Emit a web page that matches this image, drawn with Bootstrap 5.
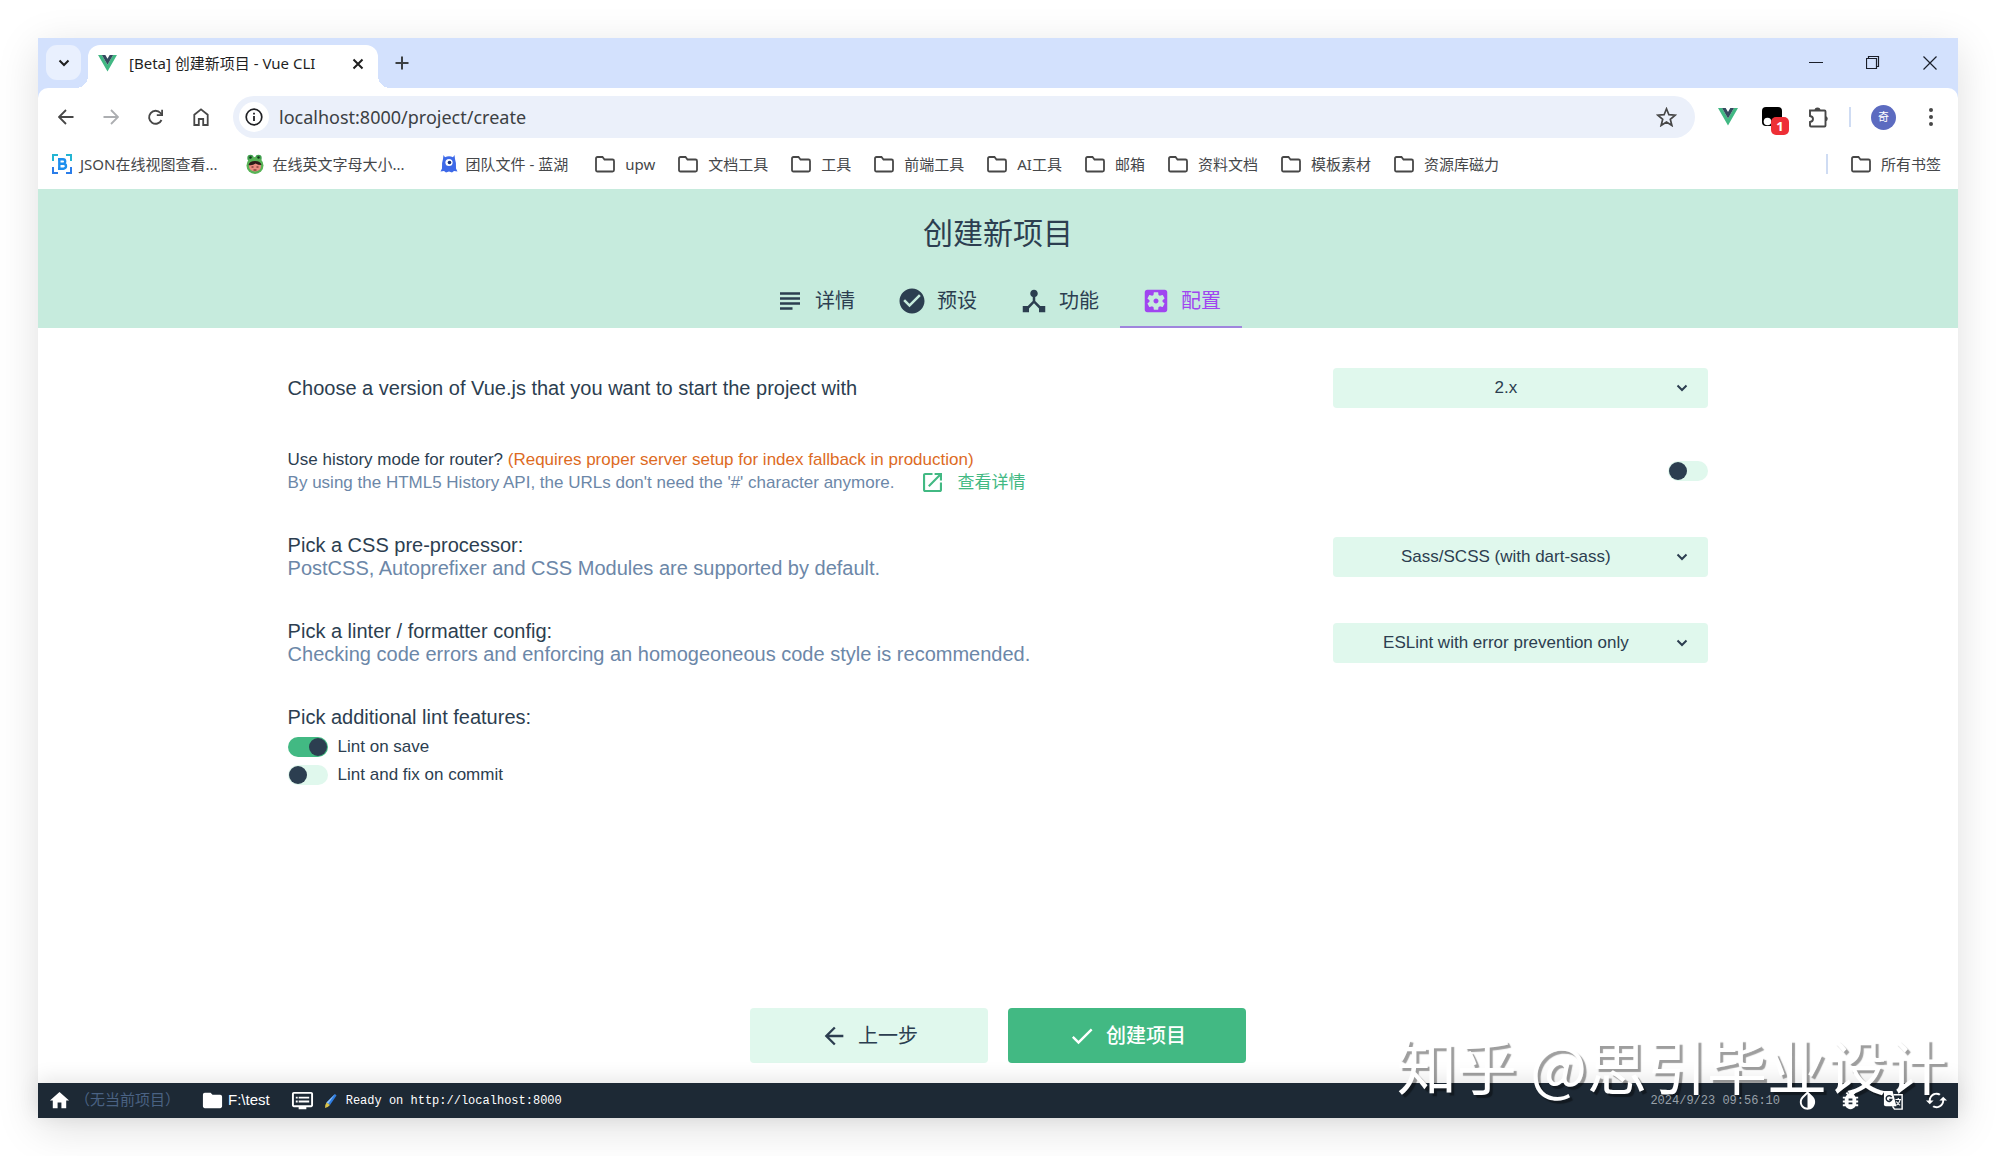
<!DOCTYPE html>
<html lang="zh-CN">
<head>
<meta charset="utf-8">
<meta name="viewport" content="width=device-width, initial-scale=1">
<title>[Beta] 创建新项目 - Vue CLI</title>
<link rel="stylesheet" href="https://cdn.jsdelivr.net/npm/bootstrap@5.3.0/dist/css/bootstrap.min.css">
<style>
  :root { --green: #42b983; --mint: #e0f8ed; --header: #c6ebdd; --ink: #2c3e50; --muted: #6c87a8; --purple: #a045f0; }
  body { background: #fff; color: var(--ink); font-family: "Liberation Sans", "Noto Sans CJK SC", sans-serif; font-size: 17px; }
  svg { display: block; flex: none; }
  button { color: inherit; }
  .desk { padding: 38px; min-height: 100vh; }
  .win { background: #fff; box-shadow: 0 10px 40px rgba(0,0,0,.13); }
  .chrome-ui { font-family: "Noto Sans", "Noto Sans CJK SC", sans-serif; font-size: 15px; color: #45474a; background: #d3e1fd; }
  .plain { background: none; border: 0; padding: 0; display: flex; align-items: center; justify-content: center; }

  /* tab strip */
  .strip { height: 50px; padding: 7px 0 0 8px; }
  .tab-search { width: 35px; height: 35px; border-radius: 11px; background: #e9f0fe; margin-right: 7px; color: #1f1f1f; }
  .page-tab { position: relative; width: 290px; height: 43px; padding: 0 14px 6px 10px; background: #fff; border-radius: 12px 12px 0 0; color: #1f1f1f; }
  .page-tab::before, .page-tab::after { content: ""; position: absolute; bottom: 0; width: 12px; height: 12px; }
  .page-tab::before { left: -12px; background: radial-gradient(circle at 0 0, transparent 12px, #fff 12px); }
  .page-tab::after { right: -12px; background: radial-gradient(circle at 100% 0, transparent 12px, #fff 12px); }
  .ctl { width: 57px; height: 36px; color: #1b1f2a; }

  /* toolbar and bookmarks */
  .tools { background: #fff; border-radius: 10px 10px 0 0; padding: 8px 12px 1px 5px; }
  .tool { width: 45px; height: 42px; color: #474747; }
  .omni { height: 42px; border-radius: 21px; background: #ebf0fa; margin-left: 10px; padding: 0 18px 0 6px; }
  .site { width: 30px; height: 30px; border-radius: 50%; background: #fff; }
  .url { border: 0; background: none; outline: 0; color: #3c4043; font-size: 18px; padding: 0 0 0 2px; }
  .ext { width: 46px; height: 42px; }
  .count { position: absolute; left: 22px; top: 21px; width: 18px; height: 18px; border-radius: 5px; background: #ee2f36; color: #fff; font-size: 13px; line-height: 18px; font-weight: 700; text-align: center; }
  .face { width: 25px; height: 25px; border-radius: 50%; background: #5c6bc0; color: #fff; font-size: 11px; }
  .sep { width: 2px; height: 20px; background: #cfdcf3; }
  .marks { background: #fff; height: 50px; padding: 0 17px 0 14px; gap: 23px; white-space: nowrap; }
  .marks a { display: flex; align-items: center; gap: 10px; color: inherit; text-decoration: none; }
  .marks .site-mark { gap: 8px; margin-right: 4px; }

  /* wizard */
  .top { background: var(--header); }
  .top h1 { font-size: 30px; line-height: 40px; padding: 25px 0 21px; margin: 0; font-weight: 400; }
  .step { color: var(--ink); text-decoration: none; font-size: 20px; line-height: 30px; padding: 11px 21px 10px; gap: 10px; border-bottom: 2px solid transparent; }
  .step.on { color: var(--purple); border-color: #9f85dd; }
  .prompts { width: 74%; padding: 40px 0; }
  .prompt { gap: 40px; margin-bottom: 40px; min-height: 40px; }
  .prompt label, .prompt p, legend { font-size: 20px; line-height: 23px; margin: 0; display: block; }
  .prompt.fine label, .prompt.fine p { font-size: 17px; }
  .prompt p { color: var(--muted); }
  .prompt p a { color: var(--green); text-decoration: none; }
  .warn { color: #dd6b1f; }
  .pick { appearance: none; width: 375px; height: 40px; flex: none; border: 0; border-radius: 4px; color: var(--ink); font-size: 17px; line-height: 24px; padding: 0 30px 0 0; text-align-last: center;
    background: var(--mint) url("data:image/svg+xml,%3Csvg xmlns='http://www.w3.org/2000/svg' viewBox='0 0 12 12'%3E%3Cpath d='M1.500 3.500 6 8l4.500-4.500' fill='none' stroke='%232c3e50' stroke-width='2'/%3E%3C/svg%3E") no-repeat right 20px center / 12px 12px; }
  .flip { appearance: none; width: 40px; height: 20px; border-radius: 10px; background: var(--mint); flex: none; margin: 0; padding: 1px; display: flex; }
  .flip::before { content: ""; width: 18px; height: 18px; border-radius: 50%; background: var(--ink); }
  .flip:checked { background: var(--green); justify-content: flex-end; }
  .lint { height: 28px; gap: 10px; }
  .acts { padding: 0 0 20px; gap: 20px; }
  .act { width: 238px; height: 55px; border: 0; border-radius: 4px; font-size: 20px; gap: 10px; display: flex; align-items: center; justify-content: center; }
  .act.back { background: var(--mint); }
  .act.go { background: var(--green); color: #fff; font-weight: 500; }

  /* status bar */
  .status { position: relative; height: 35px; background: #1d2935; color: #fff; padding: 0 10px; box-shadow: 0 -4px 20px rgba(0,0,0,.1); font-size: 15px; }
  .status .mono { font-family: "Liberation Mono", monospace; font-size: 12px; }
  .status .seg { margin-left: 21px; }
  .none { color: #4a6283; }
  .stamp { color: #98a0a8; }
  .wm { position: absolute; right: 11px; bottom: 14px; font-family: "Noto Sans CJK SC", sans-serif; font-size: 60px; line-height: 80px; color: #fff; text-shadow: 3px 3px 1px rgba(0,0,0,.38); white-space: nowrap; pointer-events: none; }
</style>
</head>
<body>
<svg width="0" height="0" class="position-absolute" aria-hidden="true">
  <symbol id="folder" viewBox="0 0 20 18"><path d="M1 3.500Q1 2 2.500 2h5l2 2.500h8Q19 4.500 19 6v9q0 1.500-1.500 1.500h-15Q1 16.500 1 15z" fill="none" stroke="#474747" stroke-width="1.800"/></symbol>
  <symbol id="vue" viewBox="0 0 20 18"><path d="M0 0h4l6 10.400L16 0h4L10 17.500z" fill="#41b883"/><path d="M4 0h3.700L10 4l2.300-4H16l-6 10.400z" fill="#34495e"/></symbol>
</svg>
<div class="desk d-flex">
<div class="win flex-grow-1 d-flex flex-column">

  <div class="chrome-ui">
    <div class="strip d-flex">
      <button class="plain tab-search" aria-label="搜索标签页"><svg width="12" height="12" viewBox="0 0 12 12"><path d="M1.500 3.500 6 8l4.500-4.500" fill="none" stroke="currentColor" stroke-width="2"/></svg></button>
      <div class="page-tab d-flex align-items-center">
        <svg width="19" height="17"><use href="#vue"/></svg>
        <span class="ms-2 ps-1 flex-grow-1">[Beta] 创建新项目 - Vue CLI</span>
        <button class="plain" aria-label="关闭标签页"><svg width="12" height="12" viewBox="0 0 12 12"><path d="m1.500 1.500 9 9m0-9-9 9" stroke="currentColor" stroke-width="2"/></svg></button>
      </div>
      <button class="plain ms-3 mb-2" aria-label="新标签页"><svg width="16" height="14" viewBox="-1 0 16 14"><path d="M7 .500v13M.500 7h13" stroke="#3c4043" stroke-width="2"/></svg></button>
      <div class="ms-auto d-flex">
        <button class="plain ctl" aria-label="最小化"><svg width="14" height="14" viewBox="0 0 14 14"><path d="M0 6.500h14" stroke="currentColor"/></svg></button>
        <button class="plain ctl" aria-label="还原"><svg width="14" height="14" viewBox="0 0 14 14"><path d="M.500 2.500h10v10H.500zM2.500 2V.500h10v10H11" fill="none" stroke="currentColor" stroke-width="1.200"/></svg></button>
        <button class="plain ctl" aria-label="关闭"><svg width="14" height="14" viewBox="0 0 14 14"><path d="m.500.500 13 13m0-13-13 13" stroke="currentColor" stroke-width="1.200"/></svg></button>
      </div>
    </div>

    <div class="tools d-flex align-items-center">
      <button class="plain tool" aria-label="返回"><svg width="16" height="16" viewBox="0 0 16 16"><path d="M15.500 8H1.500M8 1 1 8l7 7" fill="none" stroke="currentColor" stroke-width="1.800"/></svg></button>
      <button class="plain tool" aria-label="前进"><svg width="16" height="16" viewBox="0 0 16 16"><path d="M.500 8h14M8 1l7 7-7 7" fill="none" stroke="#acaeb1" stroke-width="1.800"/></svg></button>
      <button class="plain tool" aria-label="刷新"><svg width="17" height="17" viewBox="0 0 17 17"><path d="M14.500 11A6.500 6.500 0 1 1 13.500 4L15 5.700" fill="none" stroke="currentColor" stroke-width="1.900"/><path d="M16 .800V7H9.800V5.200h4.400V.800z" fill="currentColor"/></svg></button>
      <button class="plain tool" aria-label="主页"><svg width="16" height="18" viewBox="0 0 16 18"><path d="M1.300 6.800 8 1.400l6.700 5.400V17h-4.500v-6H5.800v6H1.300z" fill="none" stroke="currentColor" stroke-width="1.800"/></svg></button>
      <div class="omni d-flex align-items-center flex-grow-1">
        <button class="plain site" aria-label="查看网站信息"><svg width="18" height="18" viewBox="0 0 18 18"><circle cx="9" cy="9" r="7.800" fill="none" stroke="#202124" stroke-width="1.700"/><path d="M9 8v5M9 4.700v1.800" stroke="#202124" stroke-width="1.800"/></svg></button>
        <input class="url flex-grow-1 ms-2" type="text" aria-label="地址" value="localhost:8000/project/create">
        <button class="plain" aria-label="添加书签"><svg width="21" height="20" viewBox="0 0 21 20"><path d="m10.500 1.800 2.400 5.900 6.300.500-4.900 4.100 1.600 6.200-5.400-3.400-5.400 3.400 1.600-6.200-4.900-4.100 6.300-.500z" fill="none" stroke="#474747" stroke-width="1.700"/></svg></button>
      </div>
      <button class="plain ext ms-2 ps-1" aria-label="Vue.js devtools"><svg width="20" height="18"><use href="#vue"/></svg></button>
      <button class="plain ext position-relative" aria-label="Tampermonkey"><svg width="20" height="20" viewBox="0 0 20 20"><rect width="20" height="19" rx="4" fill="#000"/><circle cx="5.500" cy="14.500" r="3.800" fill="#fff"/><circle cx="14.500" cy="14.500" r="3.800" fill="#fff"/></svg><span class="count">1</span></button>
      <button class="plain ext" aria-label="扩展程序"><svg width="21" height="21" viewBox="0 0 21 21"><path d="M2 3.500h14.500q1 0 1 1v14q0 1-1 1H3q-1 0-1-1V15q3-.500 3-3t-3-3z" fill="none" stroke="#474747" stroke-width="1.900"/><path d="M6.500 3.500a3 3 0 0 1 6 0M17.500 9a2.800 2.800 0 0 1 0 5.500" fill="#474747"/></svg></button>
      <span class="sep ms-2 me-3"></span>
      <button class="plain face ms-1" aria-label="个人资料">奇</button>
      <button class="plain ms-4 me-2 pe-1 ps-2" aria-label="菜单"><svg width="6" height="20" viewBox="0 0 6 20"><g fill="#474747"><circle cx="3" cy="3" r="2"/><circle cx="3" cy="10" r="2"/><circle cx="3" cy="17" r="2"/></g></svg></button>
    </div>

    <nav class="marks d-flex align-items-center" aria-label="书签">
      <a class="site-mark" href="#"><svg width="20" height="20" viewBox="0 0 20 20"><g fill="none" stroke-width="2"><path d="M6 1H1v6M14 1h5v6" stroke="#23b5d3"/><path d="M6 19H1v-6M14 19h5v-6" stroke="#2b7de9"/><path d="M7.300 5v10M6 5.300h5a2.200 2.200 0 0 1 0 4.400H7.500h4a2.500 2.500 0 0 1 0 5H6" stroke="#1e8fee" stroke-width="2.400"/></g></svg>JSON在线视图查看...</a>
      <a class="site-mark" href="#"><svg width="20" height="20" viewBox="0 0 20 20"><circle cx="5.500" cy="4" r="3.200" fill="#3f9e4d"/><circle cx="13.500" cy="4" r="3.200" fill="#3f9e4d"/><circle cx="10" cy="11.500" r="8.500" fill="#58b356"/><circle cx="5.500" cy="3.500" r="1.200" fill="#12351b"/><circle cx="13.500" cy="3.500" r="1.200" fill="#12351b"/><ellipse cx="10" cy="12.500" rx="6" ry="5" fill="#e98b80"/><path d="M3.500 11q1-4 6.500-4t6.500 4q-3.500 0-6-1.500-3 2.500-7 1.500z" fill="#2c1b18"/><path d="M6.500 13h2m3 0h2M8.500 16h3" stroke="#5b1f1c" stroke-width="1.200"/></svg>在线英文字母大小...</a>
      <a class="site-mark ms-2" href="#"><svg width="18" height="20" viewBox="0 0 18 20"><path d="M3.500 1 5 3.200q4-1.700 8 0L14.500 1l.5 4q1.500 4 1 9.500l1.500 3-3.500-.500-2 1.500-3-1-3 1-2-1.500-3.500.500 1.500-3q-.500-5.500 1-9.500z" fill="#3d69e8"/><circle cx="9" cy="8.500" r="3.600" fill="#fff"/><circle cx="9.500" cy="8.500" r="1.800" fill="#18307a"/></svg>团队文件 - 蓝湖</a>
      <a href="#"><svg width="20" height="18"><use href="#folder"/></svg>upw</a>
      <a href="#"><svg width="20" height="18"><use href="#folder"/></svg>文档工具</a>
      <a href="#"><svg width="20" height="18"><use href="#folder"/></svg>工具</a>
      <a href="#"><svg width="20" height="18"><use href="#folder"/></svg>前端工具</a>
      <a href="#"><svg width="20" height="18"><use href="#folder"/></svg>AI工具</a>
      <a href="#"><svg width="20" height="18"><use href="#folder"/></svg>邮箱</a>
      <a href="#"><svg width="20" height="18"><use href="#folder"/></svg>资料文档</a>
      <a href="#"><svg width="20" height="18"><use href="#folder"/></svg>模板素材</a>
      <a href="#"><svg width="20" height="18"><use href="#folder"/></svg>资源库磁力</a>
      <span class="sep ms-auto"></span>
      <a href="#"><svg width="20" height="18"><use href="#folder"/></svg>所有书签</a>
    </nav>
  </div>

  <header class="top text-center">
    <h1>创建新项目</h1>
    <nav class="d-flex justify-content-center">
      <a class="step d-flex" href="#"><svg width="30" height="30" viewBox="0 0 24 24" fill="currentColor"><path d="M14 17H4v2h10v-2zm6-8H4v2h16V9zM4 15h16v-2H4v2zM4 5v2h16V5H4z"/></svg>详情</a>
      <a class="step d-flex" href="#"><svg width="30" height="30" viewBox="0 0 24 24" fill="currentColor"><path d="M12 2C6.480 2 2 6.480 2 12s4.480 10 10 10 10-4.480 10-10S17.520 2 12 2zm-2 15-5-5 1.410-1.410L10 14.170l7.590-7.590L19 8l-9 9z"/></svg>预设</a>
      <a class="step d-flex" href="#"><svg width="30" height="30" viewBox="0 0 24 24" fill="currentColor"><path d="m17 16-4-4V8.820C14.160 8.400 15 7.300 15 6c0-1.660-1.340-3-3-3S9 4.340 9 6c0 1.300.840 2.400 2 2.820V12l-4 4H3v5h5v-3.050l4-4.200 4 4.200V21h5v-5h-4z"/></svg>功能</a>
      <a class="step on d-flex" href="#" aria-current="step"><svg width="30" height="30" viewBox="0 0 24 24" fill="currentColor"><path d="M12 10c-1.100 0-2 .900-2 2s.900 2 2 2 2-.900 2-2-.900-2-2-2zm7-7H5c-1.110 0-2 .900-2 2v14c0 1.100.890 2 2 2h14c1.110 0 2-.900 2-2V5c0-1.100-.890-2-2-2zm-1.750 9c0 .230-.020.460-.050.680l1.480 1.160c.130.110.170.300.080.450l-1.400 2.420c-.090.150-.270.210-.430.150l-1.740-.700c-.360.280-.760.510-1.180.690l-.260 1.850c-.030.170-.180.300-.350.300h-2.800c-.170 0-.320-.130-.350-.290l-.260-1.850c-.430-.180-.820-.410-1.180-.690l-1.740.700c-.160.060-.340 0-.430-.150l-1.400-2.420c-.090-.150-.050-.340.080-.450l1.480-1.160c-.030-.230-.050-.460-.050-.690s.020-.460.050-.680l-1.480-1.160c-.130-.110-.170-.300-.080-.450l1.400-2.420c.090-.150.270-.210.430-.150l1.740.700c.360-.280.760-.510 1.180-.690l.260-1.850c.030-.170.180-.300.350-.300h2.800c.170 0 .320.130.350.290l.260 1.850c.430.180.820.410 1.180.690l1.740-.700c.160-.060.340 0 .430.150l1.400 2.420c.090.150.050.340-.080.450l-1.480 1.160c.030.230.050.460.050.690z"/></svg>配置</a>
    </nav>
  </header>

  <main class="prompts mx-auto flex-grow-1">
    <div class="prompt d-flex justify-content-between align-items-center">
      <label for="ver">Choose a version of Vue.js that you want to start the project with</label>
      <select class="pick" id="ver"><option>2.x</option></select>
    </div>
    <div class="prompt fine d-flex justify-content-between align-items-center">
      <div>
        <label for="hist">Use history mode for router? <span class="warn">(Requires proper server setup for index fallback in production)</span></label>
        <p class="d-flex align-items-center">By using the HTML5 History API, the URLs don't need the '#' character anymore.
          <a class="d-flex align-items-center ms-4 ps-1" href="#"><svg class="me-3" width="19" height="19" viewBox="3 3 18 18" fill="currentColor"><path d="M19 19H5V5h7V3H5c-1.110 0-2 .900-2 2v14c0 1.100.890 2 2 2h14c1.100 0 2-.900 2-2v-7h-2v7zM14 3v2h3.590l-9.830 9.830 1.410 1.410L19 6.410V10h2V3h-7z"/></svg>查看详情</a></p>
      </div>
      <input class="flip" type="checkbox" role="switch" id="hist">
    </div>
    <div class="prompt d-flex justify-content-between align-items-center">
      <div>
        <label for="css">Pick a CSS pre-processor:</label>
        <p>PostCSS, Autoprefixer and CSS Modules are supported by default.</p>
      </div>
      <select class="pick" id="css"><option>Sass/SCSS (with dart-sass)</option></select>
    </div>
    <div class="prompt d-flex justify-content-between align-items-center">
      <div>
        <label for="linter">Pick a linter / formatter config:</label>
        <p>Checking code errors and enforcing an homogeoneous code style is recommended.</p>
      </div>
      <select class="pick" id="linter"><option>ESLint with error prevention only</option></select>
    </div>
    <fieldset>
      <legend class="mb-1">Pick additional lint features:</legend>
      <div class="lint d-flex align-items-center"><input class="flip" type="checkbox" role="switch" id="save" checked><label for="save">Lint on save</label></div>
      <div class="lint d-flex align-items-center"><input class="flip" type="checkbox" role="switch" id="commit"><label for="commit">Lint and fix on commit</label></div>
    </fieldset>
  </main>

  <div class="acts d-flex justify-content-center">
    <button class="act back" type="button"><svg width="28" height="28" viewBox="0 0 24 24" fill="currentColor"><path d="M20 11H7.830l5.590-5.590L12 4l-8 8 8 8 1.410-1.410L7.830 13H20v-2z"/></svg>上一步</button>
    <button class="act go" type="button"><svg width="28" height="28" viewBox="0 0 24 24" fill="currentColor"><path d="M9 16.170 4.830 12l-1.420 1.410L9 19 21 7l-1.410-1.410z"/></svg>创建项目</button>
  </div>

  <footer class="status d-flex align-items-center">
    <svg width="23" height="23" viewBox="0 0 24 24" fill="#fff"><path d="M10 20v-6h4v6h5v-8h3L12 3 2 12h3v8z"/></svg>
    <span class="none ms-1">（无当前项目）</span>
    <svg class="seg" width="23" height="23" viewBox="0 0 24 24" fill="#fff"><path d="M10 4H4c-1.100 0-1.990.900-1.990 2L2 18c0 1.100.900 2 2 2h16c1.100 0 2-.900 2-2V8c0-1.100-.900-2-2-2h-8l-2-2z"/></svg>
    <span class="ms-1">F:\test</span>
    <svg class="seg" width="23" height="23" viewBox="0 0 24 24" fill="#fff"><path d="M21 3H3c-1.100 0-2 .900-2 2v12c0 1.100.900 2 2 2h5v2h8v-2h5c1.100 0 1.990-.900 1.990-2L23 5c0-1.100-.900-2-2-2zm0 14H3V5h18v12zM19 8H8v2h11V8zm0 4H8v2h11v-2zM7 8H5v2h2V8zm0 4H5v2h2v-2z"/></svg>
    <svg class="ms-2" width="16" height="16" viewBox="0 0 16 16"><path d="m13 1 1.500 1.500L8 12l-3.500-2.500z" fill="#2f7de0"/><path d="m13 1-8.500 8.500L6 11z" fill="#8cc4ff"/><path d="M4.500 9.500 8 12q-2 2.500-5 3 0-3.500 1.500-5.500z" fill="#d9c24a"/></svg>
    <span class="mono ms-2">Ready on http://localhost:8000</span>
    <span class="mono stamp ms-auto position-relative z-1">2024/9/23 09:56:10</span>
    <div class="d-flex ms-3 gap-3 position-relative z-1">
      <svg width="23" height="23" viewBox="0 0 24 24" fill="#fff"><path d="M17.660 7.930 12 2.270 6.340 7.930c-3.120 3.120-3.120 8.190 0 11.310C7.900 20.800 9.950 21.580 12 21.580s4.100-.780 5.660-2.340c3.120-3.120 3.120-8.190 0-11.310zM12 19.590c-1.600 0-3.110-.620-4.240-1.760C6.620 16.690 6 15.190 6 13.590s.620-3.110 1.760-4.240L12 5.100v14.490z"/></svg>
      <svg class="ms-1" width="23" height="23" viewBox="0 0 24 24" fill="#fff"><path d="M20 8h-2.810c-.450-.780-1.070-1.450-1.820-1.960L17 4.410 15.590 3l-2.170 2.170C12.960 5.060 12.490 5 12 5s-.960.060-1.410.170L8.410 3 7 4.410l1.620 1.630C7.880 6.550 7.260 7.220 6.810 8H4v2h2.090c-.050.330-.090.660-.090 1v1H4v2h2v1c0 .340.040.670.090 1H4v2h2.810c1.040 1.790 2.970 3 5.190 3s4.150-1.210 5.190-3H20v-2h-2.090c.050-.330.090-.660.090-1v-1h2v-2h-2v-1c0-.340-.040-.670-.090-1H20V8zm-6 8h-4v-2h4v2zm0-4h-4v-2h4v2z"/></svg>
      <svg class="ms-1" width="23" height="23" viewBox="0 0 24 24"><path d="M2 2h9l4 16H4q-2 0-2-2z" fill="#fff"/><path d="M12 6h9v15h-8l-2-3" fill="none" stroke="#fff" stroke-width="1.500"/><path d="M10 8.500A3 3 0 1 0 10.200 11H7.500" fill="none" stroke="#1d2935" stroke-width="1.500"/><path d="M14 11h6m-3-1.500V11m2 0q-1 4-4 6m0-4q2 3 4 4" fill="none" stroke="#fff" stroke-width="1.200"/></svg>
      <svg class="ms-1" width="23" height="23" viewBox="0 0 24 24" fill="#fff"><path d="m19 8-4 4h3c0 3.310-2.690 6-6 6-1.010 0-1.970-.250-2.800-.700l-1.460 1.460C8.970 19.540 10.430 20 12 20c4.420 0 8-3.580 8-8h3l-4-4zM6 12c0-3.310 2.690-6 6-6 1.010 0 1.970.250 2.800.700l1.460-1.460C15.030 4.460 13.570 4 12 4c-4.420 0-8 3.580-8 8H1l4 4 4-4H6z"/></svg>
    </div>
    <span class="wm">知乎 @思引毕业设计</span>
  </footer>
</div>
</div>
<script src="https://cdn.jsdelivr.net/npm/bootstrap@5.3.0/dist/js/bootstrap.bundle.min.js"></script>
</body>
</html>
